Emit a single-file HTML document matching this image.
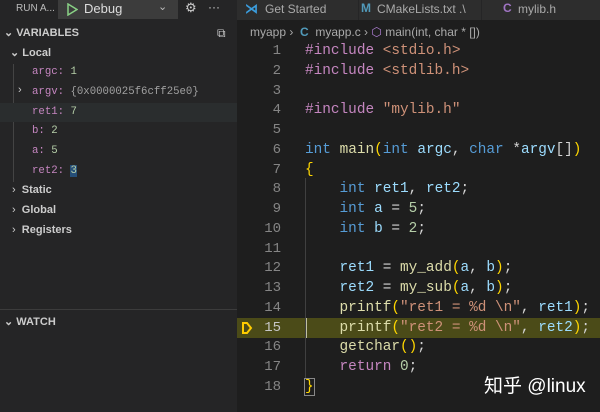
<!DOCTYPE html><html><head><style>
*{margin:0;padding:0;box-sizing:border-box}
body{width:600px;height:412px;overflow:hidden;background:#1e1e1e;font-family:"Liberation Sans",sans-serif;position:relative}
.a{position:absolute;white-space:pre}
.side{position:absolute;left:0;top:0;width:237px;height:412px;background:#252526}
.top{position:absolute;left:0;top:0;width:600px;height:20px;background:#252526}
.s{font-size:11px;color:#cccccc;font-weight:bold}
.v{font-family:"Liberation Mono",monospace;font-size:10.7px;color:#c586c0}
.v b{font-weight:normal;color:#b5cea8}
.code{font-family:"Liberation Mono",monospace;font-size:14.4px;color:#d4d4d4}
.ln{font-family:"Liberation Mono",monospace;font-size:14px;color:#858585;width:44px;text-align:right;left:237px}
.k{color:#569cd6}.p{color:#c586c0}.st{color:#ce9178}.f{color:#dcdcaa}.n{color:#b5cea8}.id{color:#9cdcfe}.y{color:#ffd700}
</style></head><body>
<div class="side"></div>
<div class="top"></div>
<div class="a" style="left:58px;top:0;width:120px;height:19px;background:#3c3c3c"></div>
<div class="a" style="left:237px;top:0;width:121px;height:20px;background:#2d2d2d"></div>
<div class="a" style="left:359px;top:0;width:122px;height:20px;background:#2d2d2d"></div>
<div class="a" style="left:482px;top:0;width:118px;height:20px;background:#2d2d2d"></div>
<div class="a" style="left:16px;top:3px;font-size:10px;color:#bbb">RUN A...</div>
<svg class="a" style="left:66px;top:3px" width="12" height="13"><path d="M2 1L11 6.5L2 12Z" fill="none" stroke="#89d185" stroke-width="1.5"/></svg>
<div class="a" style="left:84px;top:1px;font-size:13px;color:#ddd">Debug</div>
<div class="a" style="left:158px;top:0;font-size:11px;color:#bbb">⌄</div>
<div class="a" style="left:185px;top:0px;font-size:13px;color:#ccc">⚙</div>
<div class="a" style="left:208px;top:0px;font-size:12px;color:#ccc">···</div>
<div class="a" style="left:245px;top:1px;font-size:13px;color:#3b9ddd;font-weight:bold">⋊</div>
<div class="a" style="left:265px;top:2px;font-size:12px;color:#aaa">Get Started</div>
<div class="a" style="left:361px;top:1px;font-size:12px;color:#519aba;font-weight:bold">M</div>
<div class="a" style="left:377px;top:2px;font-size:12px;color:#aaa">CMakeLists.txt .\</div>
<div class="a" style="left:503px;top:1px;font-size:12px;color:#a074c4;font-weight:bold">C</div>
<div class="a" style="left:518px;top:2px;font-size:12px;color:#aaa">mylib.h</div>

<div class="a s" style="left:4px;top:26px">⌄ VARIABLES</div>
<div class="a" style="left:217px;top:26px;font-size:12px;color:#ccc">⧉</div>
<div class="a s" style="left:10px;top:46px">⌄ Local</div>
<div class="a" style="left:13px;top:64px;width:1px;height:118px;background:#444"></div>
<div class="a" style="left:0;top:103px;width:237px;height:19px;background:#2a2d2e"></div>
<div class="a v" style="left:32px;top:66px">argc: <b>1</b></div>
<div class="a s" style="left:18px;top:84px;font-weight:normal">›</div>
<div class="a v" style="left:32px;top:86px">argv: <b style="color:#a0a0a0">{0x0000025f6cff25e0}</b></div>
<div class="a v" style="left:32px;top:106px">ret1: <b>7</b></div>
<div class="a v" style="left:32px;top:125px">b: <b>2</b></div>
<div class="a v" style="left:32px;top:145px">a: <b>5</b></div>
<div class="a v" style="left:32px;top:165px">ret2: <b style="background:#264f78">3</b></div>
<div class="a s" style="left:12px;top:184px"><span style="font-weight:normal">›</span>  Static</div>
<div class="a s" style="left:12px;top:204px"><span style="font-weight:normal">›</span>  Global</div>
<div class="a s" style="left:12px;top:224px"><span style="font-weight:normal">›</span>  Registers</div>
<div class="a" style="left:0;top:309px;width:237px;height:1px;background:#3c3c3c"></div>
<div class="a s" style="left:4px;top:315px">⌄ WATCH</div>

<div class="a" style="left:250px;top:25px;font-size:12px;color:#aaa">myapp ›  <span style="color:#519aba;font-weight:bold">C</span>  myapp.c › <span style="color:#b180d7">⬡</span> main(int, char * [])</div>

<div class="a" style="left:237px;top:318px;width:363px;height:20px;background:#4b4b18"></div>
<div class="a" style="left:305px;top:318px;width:2px;height:20px;background:#c0c0a0"></div>
<svg class="a" style="left:241px;top:322px" width="12" height="12"><path d="M2 1H6L10 6L6 11H2Z" fill="none" stroke="#ffcc00" stroke-width="2"/></svg>
<div class="a" style="left:305px;top:178px;width:1px;height:200px;background:#404040"></div>

<div class="a ln" style="top:43px">1</div>
<div class="a ln" style="top:63px">2</div>
<div class="a ln" style="top:83px">3</div>
<div class="a ln" style="top:102px">4</div>
<div class="a ln" style="top:122px">5</div>
<div class="a ln" style="top:142px">6</div>
<div class="a ln" style="top:162px">7</div>
<div class="a ln" style="top:181px">8</div>
<div class="a ln" style="top:201px">9</div>
<div class="a ln" style="top:221px">10</div>
<div class="a ln" style="top:241px">11</div>
<div class="a ln" style="top:260px">12</div>
<div class="a ln" style="top:280px">13</div>
<div class="a ln" style="top:300px">14</div>
<div class="a ln" style="top:320px;color:#c6c6c6">15</div>
<div class="a ln" style="top:339px">16</div>
<div class="a ln" style="top:359px">17</div>
<div class="a ln" style="top:379px">18</div>

<div class="a code" style="left:305px;top:43px"><span class="p">#include</span> <span class="st">&lt;stdio.h&gt;</span></div>
<div class="a code" style="left:305px;top:63px"><span class="p">#include</span> <span class="st">&lt;stdlib.h&gt;</span></div>
<div class="a code" style="left:305px;top:102px"><span class="p">#include</span> <span class="st">"mylib.h"</span></div>
<div class="a code" style="left:305px;top:142px"><span class="k">int</span> <span class="f">main</span><span class="y">(</span><span class="k">int</span> <span class="id">argc</span>, <span class="k">char</span> *<span class="id">argv</span>[]<span class="y">)</span></div>
<div class="a code" style="left:305px;top:162px"><span class="y">{</span></div>
<div class="a code" style="left:305px;top:181px">    <span class="k">int</span> <span class="id">ret1</span>, <span class="id">ret2</span>;</div>
<div class="a code" style="left:305px;top:201px">    <span class="k">int</span> <span class="id">a</span> = <span class="n">5</span>;</div>
<div class="a code" style="left:305px;top:221px">    <span class="k">int</span> <span class="id">b</span> = <span class="n">2</span>;</div>
<div class="a code" style="left:305px;top:260px">    <span class="id">ret1</span> = <span class="f">my_add</span><span class="y">(</span><span class="id">a</span>, <span class="id">b</span><span class="y">)</span>;</div>
<div class="a code" style="left:305px;top:280px">    <span class="id">ret2</span> = <span class="f">my_sub</span><span class="y">(</span><span class="id">a</span>, <span class="id">b</span><span class="y">)</span>;</div>
<div class="a code" style="left:305px;top:300px">    <span class="f">printf</span><span class="y">(</span><span class="st">"ret1 = %d \n"</span>, <span class="id">ret1</span><span class="y">)</span>;</div>
<div class="a code" style="left:305px;top:320px">    <span class="f">printf</span><span class="y">(</span><span class="st">"ret2 = %d \n"</span>, <span class="id">ret2</span><span class="y">)</span>;</div>
<div class="a code" style="left:305px;top:339px">    <span class="f">getchar</span><span class="y">()</span>;</div>
<div class="a code" style="left:305px;top:359px">    <span class="p">return</span> <span class="n">0</span>;</div>
<div class="a code" style="left:305px;top:379px;outline:1px solid #888"><span class="y">}</span></div>

<div class="a" style="left:484px;top:371px;font-size:19px;color:#fff;font-family:'Liberation Sans','Noto Sans CJK SC',sans-serif">知乎 @linux</div>
</body></html>
